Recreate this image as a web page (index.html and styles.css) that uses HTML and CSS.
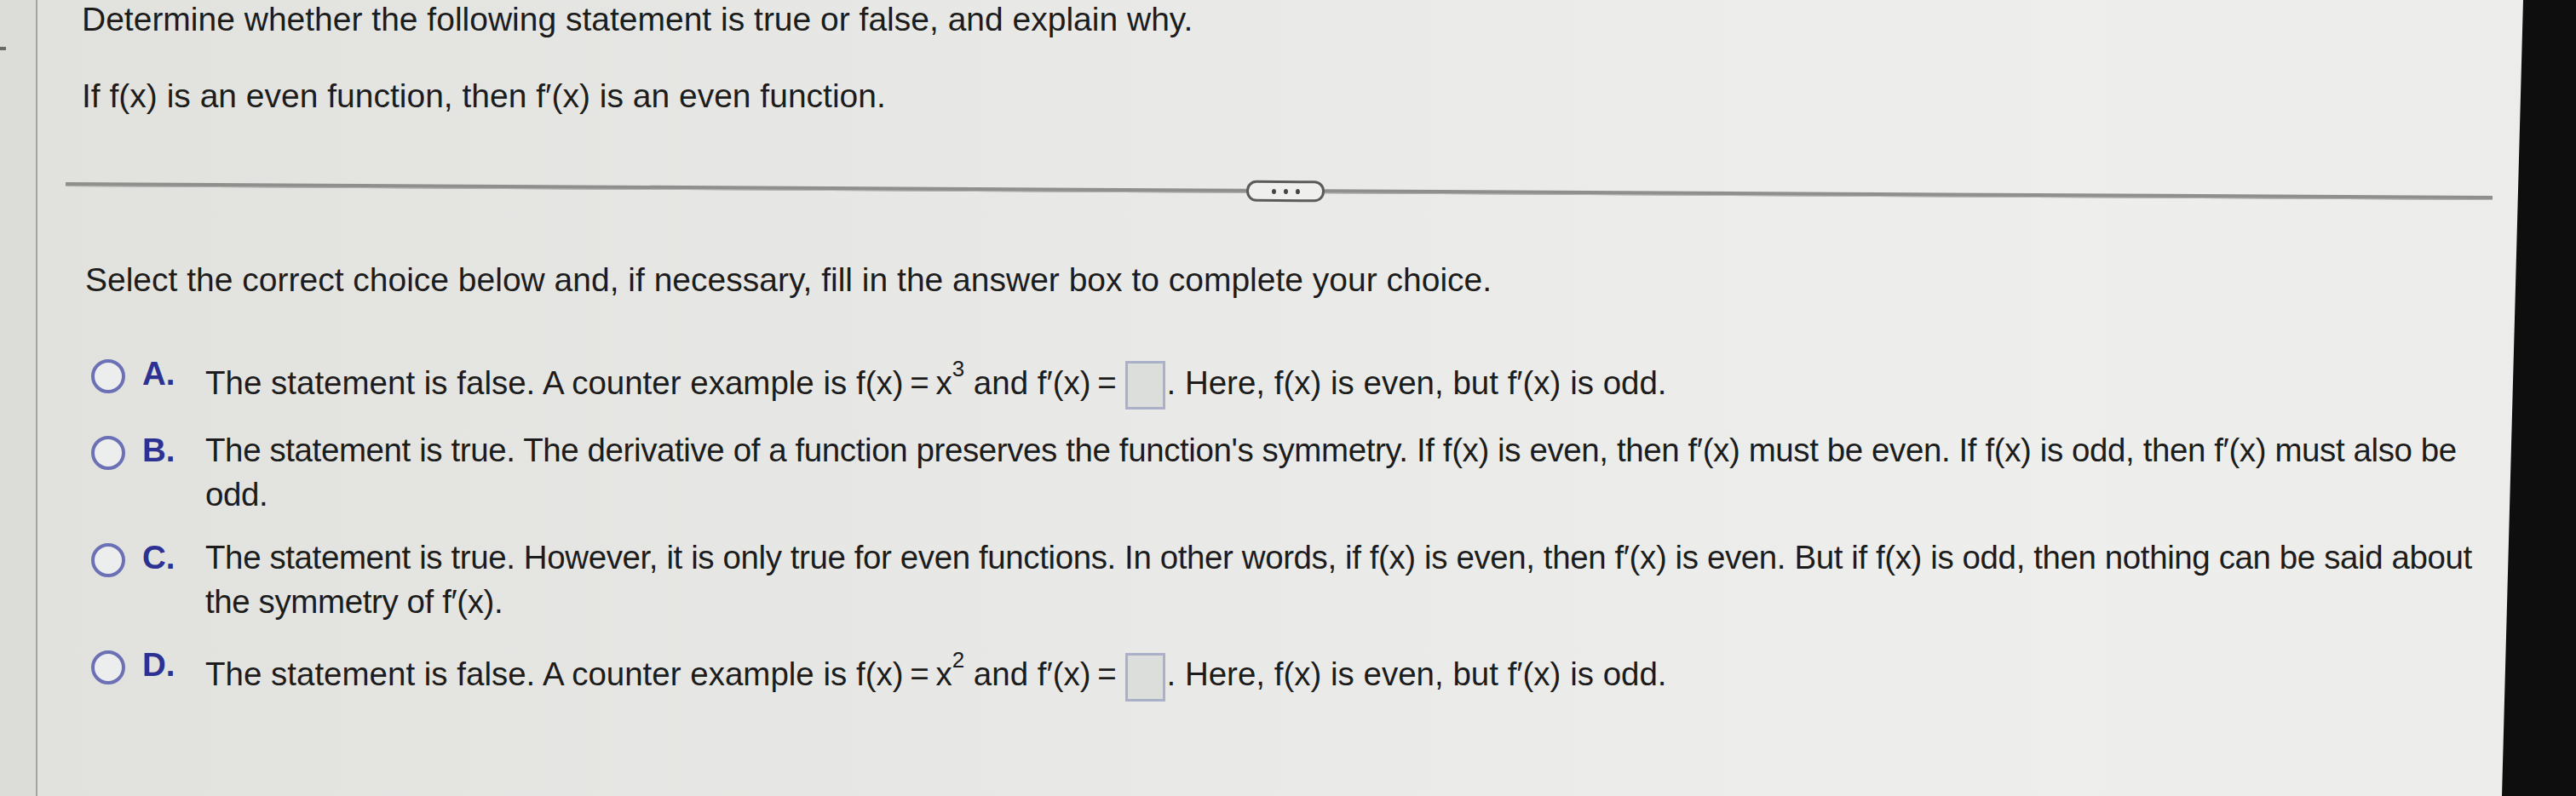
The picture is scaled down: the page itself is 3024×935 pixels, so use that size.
FILE: index.html
```html
<!DOCTYPE html>
<html lang="en">
<head>
<meta charset="utf-8">
<title>Even function question</title>
<link rel="stylesheet" href="styles.css">
</head>
<body>
<div class="screen">
  <div class="strip"><span class="strip-mark"></span></div>
  <main class="main">
    <section class="question">
      <p class="q-line">Determine whether the following statement is true or false, and explain why.</p>
      <p class="q-line q-second">If f(x) is an even function, then f′(x) is an even function.</p>
    </section>

    <div class="sep">
      <span class="sep-line sep-left"></span>
      <button class="more" type="button" aria-label="more"><span class="dot"></span><span class="dot"></span><span class="dot"></span></button>
      <span class="sep-line sep-right"></span>
    </div>

    <p class="instructions">Select the correct choice below and, if necessary, fill in the answer box to complete your choice.</p>

    <div class="options">
      <div class="option">
        <span class="radio"></span>
        <span class="label">A.</span>
        <div class="text">The statement is false. A counter example is f(x)&thinsp;=&thinsp;x<sup>3</sup> and f′(x)&thinsp;=&thinsp;<span class="answer-box"></span>. Here, f(x) is even, but f′(x) is odd.</div>
      </div>
      <div class="option">
        <span class="radio"></span>
        <span class="label">B.</span>
        <div class="text text-tight">The statement is true. The derivative of a function preserves the function's symmetry. If f(x) is even, then f′(x) must be even. If f(x) is odd, then f′(x) must also be odd.</div>
      </div>
      <div class="option">
        <span class="radio"></span>
        <span class="label">C.</span>
        <div class="text text-tight">The statement is true. However, it is only true for even functions. In other words, if f(x) is even, then f′(x) is even. But if f(x) is odd, then nothing can be said about the symmetry of f′(x).</div>
      </div>
      <div class="option">
        <span class="radio"></span>
        <span class="label">D.</span>
        <div class="text">The statement is false. A counter example is f(x)&thinsp;=&thinsp;x<sup>2</sup> and f′(x)&thinsp;=&thinsp;<span class="answer-box"></span>. Here, f(x) is even, but f′(x) is odd.</div>
      </div>
    </div>
  </main>
  <div class="bezel"></div>
</div>
</body>
</html>
```

FILE: styles.css
```css
html, body {
  margin: 0;
  padding: 0;
}

body {
  width: 3024px;
  height: 935px;
  overflow: hidden;
  background: #e7e8e5;
  font-family: "Liberation Sans", Arial, sans-serif;
  color: #1c1c1c;
}

.screen {
  display: flex;
  height: 935px;
  background: linear-gradient(90deg, #e1e2de 0%, #e8e9e6 40%, #eeefec 80%, #ececea 100%);
}

.strip {
  width: 42px;
  flex: none;
  background: #dcddd9;
  border-right: 2px solid #a3a4a1;
  display: flex;
  flex-direction: column;
}

.strip-mark {
  display: block;
  width: 7px;
  height: 4px;
  margin-top: 55px;
  background: #6a6a6a;
}

.main {
  flex: 1;
  min-width: 0;
  font-size: 39px;
}

.question {
  padding-left: 52px;
}

.q-line {
  margin: 0;
  line-height: 36px;
  margin-top: 5px;
}

.q-second {
  margin-top: 54px;
}

.sep {
  display: flex;
  align-items: center;
  margin-top: 81px;
  margin-left: 33px;
  margin-right: 11px;
  transform: rotate(0.32deg);
}

.sep-line {
  display: block;
  height: 4px;
  background: #8f908e;
  border-bottom: 1px solid #b4b5b2;
}

.sep-left {
  width: 1386px;
}

.sep-right {
  flex: 1;
}

.more {
  width: 92px;
  height: 25px;
  box-sizing: border-box;
  border: 3px solid #5a5b5a;
  border-radius: 12px;
  background: #eff0ed;
  padding: 0;
  display: flex;
  align-items: center;
  justify-content: center;
  gap: 9px;
}

.dot {
  width: 5px;
  height: 6px;
  border-radius: 50%;
  background: #464646;
}

.instructions {
  margin: 74px 0 0;
  padding-left: 56px;
  line-height: 36px;
}

.options {
  margin-top: 66px;
  padding-left: 63px;
  padding-right: 12px;
  display: flex;
  flex-direction: column;
  gap: 22px;
  font-size: 38.5px;
}

.option {
  display: flex;
  align-items: flex-start;
}

.radio {
  flex: none;
  width: 40px;
  height: 40px;
  box-sizing: border-box;
  margin-top: 9px;
  border: 4px solid #6c71b6;
  border-radius: 50%;
  background: #eceeee;
}

.label {
  flex: none;
  width: 74px;
  margin-left: 20px;
  line-height: 52px;
  font-weight: bold;
  color: #2c3192;
}

.text {
  flex: 1;
  min-width: 0;
  line-height: 52px;
}

.text-tight {
  letter-spacing: -0.4px;
}

.text sup {
  font-size: 26px;
  vertical-align: 21px;
  line-height: 41px;
}

.answer-box {
  display: inline-block;
  width: 47px;
  height: 57px;
  box-sizing: border-box;
  border: 3px solid #a9b0c8;
  background: #dcdedb;
  vertical-align: middle;
  margin: 0 2px;
}

.bezel {
  width: 87px;
  flex: none;
  background: #0e0e0e;
  clip-path: polygon(25px 0, 100% 0, 100% 100%, 0 100%);
}
```
